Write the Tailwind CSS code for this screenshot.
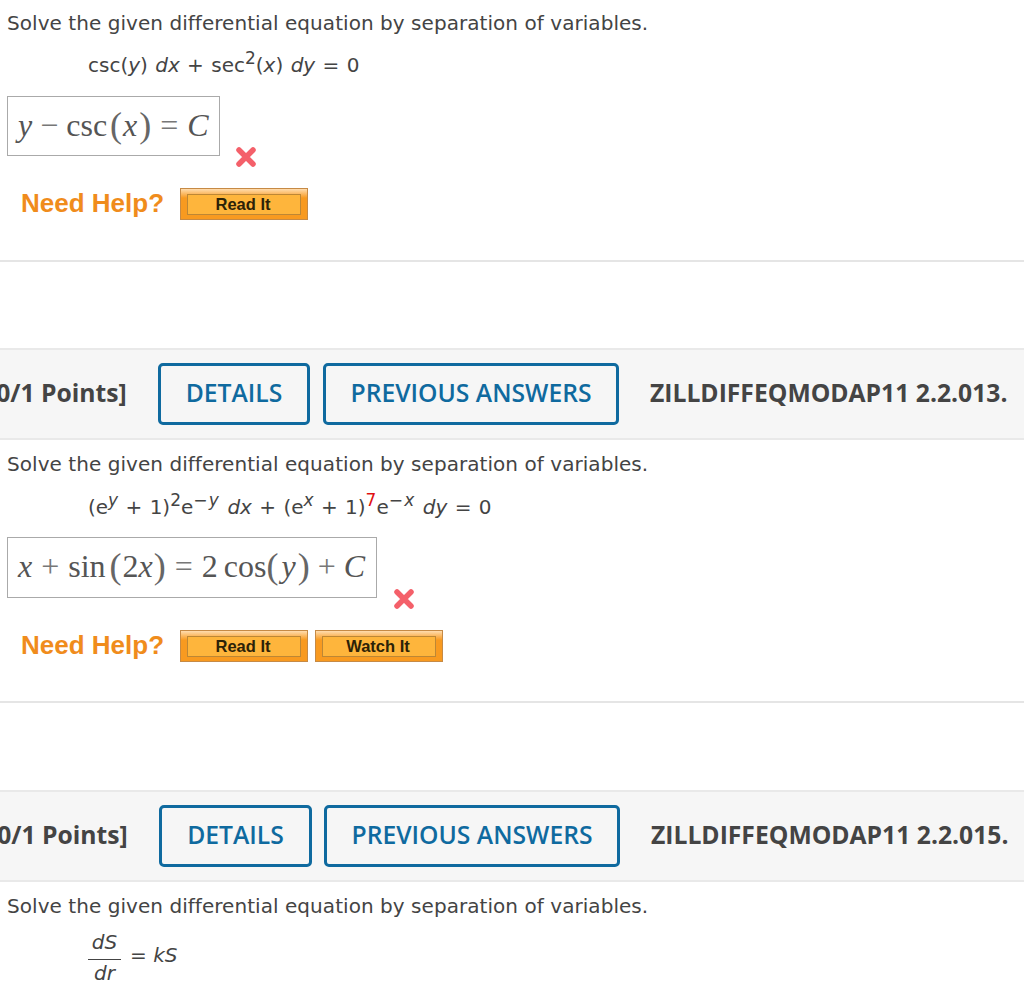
<!DOCTYPE html>
<html lang="en">

<head>
    <meta charset="UTF-8">
    <title>Separation of Variables</title>
    <script src="https://cdn.jsdelivr.net/npm/@tailwindcss/browser@4"></script>
</head>

<body class="bg-white overflow-hidden h-[997px] text-[#444] font-['DejaVu_Sans',sans-serif]">
    <!-- question 1 -->
    <section class="h-[262px] border-b-2 border-[#e5e5e5] pl-[7px] pt-[10px]">
        <p class="text-[20px] leading-[26px] tracking-[0.05px]">Solve the given differential equation by separation of variables.</p>
        <p class="ml-[81px] mt-[16px] h-[26px] text-[20px] leading-[26px] whitespace-pre [word-spacing:1px]">csc(<i>y</i>) <i>dx</i> + sec<sup class="text-[17px] leading-none top-[-8px]">2</sup>(<i>x</i>) <i>dy</i> = 0</p>
        <div class="flex items-start mt-[18px]">
            <div class="w-[213px] h-[60px] border border-[#aaa] flex items-center pl-[10px] pb-[3px] font-['Liberation_Serif',serif] text-[32px] text-[#555] whitespace-pre"><i>y</i><span class="text-[#777] mx-[8px]">−</span>csc<span class="ml-[3px] mr-[1px] text-[36px] text-[#666]">(</span><i>x</i><span class="ml-[2px] text-[36px] text-[#666]">)</span><span class="text-[#777] mx-[9px]">=</span><i>C</i></div>
            <svg class="ml-[15px] mt-[50px]" width="22" height="22" viewBox="0 0 22 22"><path d="M4 4 L18 18 M18 4 L4 18" stroke="#f4606a" stroke-width="5.5" stroke-linecap="round" /></svg>
        </div>
        <div class="flex items-center mt-[20px] ml-[14px]">
            <span class="w-[159px] mb-[2px] leading-none font-['Liberation_Sans',sans-serif] font-bold text-[26px] text-[#f08c1c]">Need Help?</span>
            <a class="w-[128px] h-[32px] border border-[#c68a45] bg-[linear-gradient(#ffdcae,#f89a20_30%)] pt-[5px] pb-[4px] px-[6px] flex"><span class="flex-1 border border-[#bd8735] bg-[#feb53c] pr-[2px] flex items-center justify-center font-['Liberation_Sans',sans-serif] font-bold text-[16.5px] text-[#2c2208]">Read It</span></a>
        </div>
    </section>

    <!-- question 2 -->
    <header class="mt-[86px] h-[92px] bg-[#f6f6f6] border-y-2 border-[#e9e9e9] flex items-center font-['Open_Sans',sans-serif] font-bold text-[24.7px] whitespace-nowrap">
        <span class="-ml-[12px] w-[170px] mb-[2px]">[0/1 Points]</span>
        <a class="w-[152px] h-[62px] pb-[2px] border-[3px] border-[#0f6a9f] rounded-[5px] flex items-center justify-center text-[#0f6a9f] font-semibold">DETAILS</a>
        <a class="ml-[13px] w-[296px] h-[62px] pb-[2px] border-[3px] border-[#0f6a9f] rounded-[5px] flex items-center justify-center text-[#0f6a9f] font-semibold">PREVIOUS ANSWERS</a>
        <span class="ml-[31px] mb-[2px]">ZILLDIFFEQMODAP11 2.2.013.</span>
    </header>
    <section class="h-[263px] border-b-2 border-[#e5e5e5] pl-[7px] pt-[11px]">
        <p class="text-[20px] leading-[26px] tracking-[0.05px]">Solve the given differential equation by separation of variables.</p>
        <p class="ml-[81px] mt-[17px] h-[26px] text-[20px] leading-[26px] whitespace-pre [word-spacing:1px]">(e<sup class="text-[17px] leading-none top-[-8px]"><i>y</i></sup> + 1)<sup class="text-[17px] leading-none top-[-8px]">2</sup>e<sup class="text-[17px] leading-none top-[-8px] tracking-[1.2px]">−<i>y</i></sup> <i>dx</i> + (e<sup class="text-[17px] leading-none top-[-8px]"><i>x</i></sup> + 1)<sup class="text-[17px] leading-none top-[-8px] text-[#e01010]">7</sup>e<sup class="text-[17px] leading-none top-[-8px] tracking-[1.2px]">−<i>x</i></sup> <i>dy</i> = 0</p>
        <div class="flex items-start mt-[17px]">
            <div class="w-[370px] h-[61px] border border-[#aaa] flex items-center pl-[10px] pb-[3px] font-['Liberation_Serif',serif] text-[32px] text-[#555] whitespace-pre"><i>x</i><span class="text-[#777] mx-[9px]">+</span>sin<span class="ml-[4px] mr-[1px] text-[36px] text-[#666]">(</span>2<i>x</i><span class="ml-[1px] text-[36px] text-[#666]">)</span><span class="text-[#777] mx-[9px]">=</span>2<span class="ml-[6px]">cos</span><span class="text-[36px] text-[#666] mr-[3px]">(</span><i>y</i><span class="text-[36px] ml-[2px] text-[#666]">)</span><span class="text-[#777] mx-[8px]">+</span><i>C</i></div>
            <svg class="ml-[16px] mt-[51px]" width="22" height="22" viewBox="0 0 22 22"><path d="M4 4 L18 18 M18 4 L4 18" stroke="#f4606a" stroke-width="5.5" stroke-linecap="round" /></svg>
        </div>
        <div class="flex items-center mt-[20px] ml-[14px]">
            <span class="w-[159px] mb-[2px] leading-none font-['Liberation_Sans',sans-serif] font-bold text-[26px] text-[#f08c1c]">Need Help?</span>
            <a class="w-[128px] h-[32px] border border-[#c68a45] bg-[linear-gradient(#ffdcae,#f89a20_30%)] pt-[5px] pb-[4px] px-[6px] flex"><span class="flex-1 border border-[#bd8735] bg-[#feb53c] pr-[2px] flex items-center justify-center font-['Liberation_Sans',sans-serif] font-bold text-[16.5px] text-[#2c2208]">Read It</span></a>
            <a class="ml-[7px] w-[128px] h-[32px] border border-[#c68a45] bg-[linear-gradient(#ffdcae,#f89a20_30%)] pt-[5px] pb-[4px] px-[6px] flex"><span class="flex-1 border border-[#bd8735] bg-[#feb53c] pr-[2px] flex items-center justify-center font-['Liberation_Sans',sans-serif] font-bold text-[16.5px] text-[#2c2208]">Watch It</span></a>
        </div>
    </section>

    <!-- question 3 -->
    <header class="mt-[87px] h-[92px] bg-[#f6f6f6] border-y-2 border-[#e9e9e9] flex items-center font-['Open_Sans',sans-serif] font-bold text-[24.7px] whitespace-nowrap">
        <span class="-ml-[11px] w-[170px] mb-[2px]">[0/1 Points]</span>
        <a class="w-[153px] h-[62px] pb-[2px] border-[3px] border-[#0f6a9f] rounded-[5px] flex items-center justify-center text-[#0f6a9f] font-semibold">DETAILS</a>
        <a class="ml-[12px] w-[296px] h-[62px] pb-[2px] border-[3px] border-[#0f6a9f] rounded-[5px] flex items-center justify-center text-[#0f6a9f] font-semibold">PREVIOUS ANSWERS</a>
        <span class="ml-[31px] mb-[2px]">ZILLDIFFEQMODAP11 2.2.015.</span>
    </header>
    <section class="pl-[7px] pt-[11px]">
        <p class="text-[20px] leading-[26px] tracking-[0.05px]">Solve the given differential equation by separation of variables.</p>
        <div class="ml-[81px] mt-[6px] flex items-center text-[20px] whitespace-pre">
            <div class="flex flex-col items-center w-[33px]">
                <i class="leading-[34px] border-b border-[#444] w-full text-center">dS</i>
                <i class="leading-[27px]">dr</i>
            </div>
            <span class="ml-[9px] mb-[2px]">= <i>kS</i></span>
        </div>
    </section>
</body>

</html>
